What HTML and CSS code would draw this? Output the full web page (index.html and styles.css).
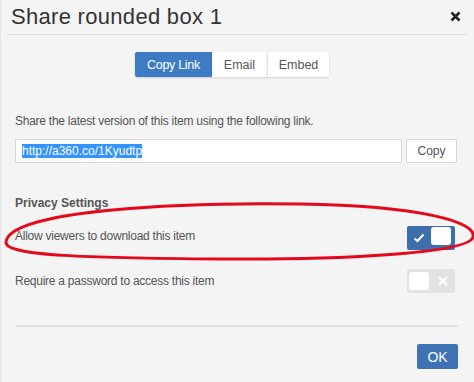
FILE: index.html
```html
<!DOCTYPE html>
<html lang="en">

<head>
    <meta charset="UTF-8">
    <meta name="viewport" content="width=device-width, initial-scale=1.0">
    <title>Share rounded box 1</title>
    <link rel="stylesheet" href="styles.css">
</head>

<body>
    <div class="dialog">
        <div class="dialog-header">
            <h1>Share rounded box 1</h1>
            <svg class="close" width="11" height="11" viewBox="0 0 11 11">
                <path d="M1.5 1.5 L9.5 9.5 M9.5 1.5 L1.5 9.5" fill="none" stroke="#222" stroke-width="2.6" />
            </svg>
        </div>

        <div class="dialog-body">
            <div class="tabs">
                <button class="tab active">Copy Link</button>
                <button class="tab email">Email</button>
                <button class="tab embed">Embed</button>
            </div>

            <p class="hint">Share the latest version of this item using the following link.</p>

            <div class="link-row">
                <div class="link-input"><span class="selected">http://a360.co/1Kyudtp</span></div>
                <button class="copy-btn">Copy</button>
            </div>

            <h2>Privacy Settings</h2>

            <div class="setting first">
                <span>Allow viewers to download this item</span>
                <div class="toggle on">
                    <svg width="12" height="10" viewBox="0 0 12 10">
                        <path d="M1.5 5.5 L4.5 8 L10.5 1.5" fill="none" stroke="#fff" stroke-width="2" />
                    </svg>
                    <span class="knob"></span>
                </div>
            </div>

            <div class="setting">
                <span>Require a password to access this item</span>
                <div class="toggle off">
                    <span class="knob"></span>
                    <svg width="12" height="12" viewBox="0 0 12 12">
                        <path d="M2 2 L10 10 M10 2 L2 10" fill="none" stroke="#fff" stroke-width="2" />
                    </svg>
                </div>
            </div>
        </div>

        <div class="dialog-footer">
            <button class="ok-btn">OK</button>
        </div>

        <!-- red annotation circle -->
        <svg class="mark" width="474" height="80" viewBox="0 0 474 80">
            <path d="M5 46 C 8 14, 180 6, 300 8 C 420 10, 476 26, 472 41 C 468 58, 330 64, 220 63 C 90 62, 3 60, 5 46 Z"
                fill="none" stroke="#e4081a" stroke-width="3" />
        </svg>
    </div>
</body>

</html>
```

FILE: styles.css
```css
body {
    margin: 0;
    background-color: #f4f4f4;
    font-family: "Liberation Sans", Arial, sans-serif;
    color: #555;
}

.dialog {
    position: relative;
    width: 474px;
    height: 382px;
    box-sizing: border-box;
    border-left: 1px solid #e6e6e6;
}

.dialog-header {
    display: flex;
    justify-content: space-between;
    align-items: center;
    height: 34px;
    margin: 0 7px 0 6px;
    padding: 0 6px 0 4px;
    border-bottom: 1px solid #dcdcdc;
}

.dialog-header h1 {
    margin: 0;
    font-size: 22px;
    font-weight: normal;
    letter-spacing: 0.3px;
    color: #333;
}

.close {
    margin-top: -2px;
}

.dialog-body {
    padding: 0 17px 0 14px;
}

.tabs {
    display: flex;
    justify-content: center;
    margin: 17px 0 0 -8px;
}

.tab {
    height: 25px;
    padding: 0;
    border: none;
    background-color: #fff;
    font-family: inherit;
    font-size: 12.5px;
    color: #555;
    white-space: nowrap;
    box-shadow: 0 1px 2px rgba(0, 0, 0, 0.15);
}

.tab.email {
    width: 55px;
}

.tab.embed {
    width: 62px;
    border-left: 1px solid #e4e4e4;
    border-radius: 0 2px 2px 0;
}

.tab.active {
    width: 77px;
    background-color: #3d7cc2;
    color: #fff;
    letter-spacing: -0.3px;
    border-radius: 2px 0 0 2px;
}

.hint {
    margin: 37px 0 0;
    font-size: 12px;
    letter-spacing: -0.25px;
    line-height: 15px;
}

.link-row {
    display: flex;
    gap: 4px;
    margin-top: 10px;
}

.link-input {
    flex: 1;
    height: 24px;
    box-sizing: border-box;
    border: 1px solid #d8d8d8;
    background-color: #fff;
    padding: 4px 6px;
    font-size: 12px;
    line-height: 14px;
}

.selected {
    background-color: #3393ff;
    color: #fff;
}

.copy-btn {
    width: 51px;
    height: 24px;
    border: 1px solid #d6d6d6;
    border-radius: 2px;
    background-color: #fff;
    font-family: inherit;
    font-size: 12px;
    color: #555;
}

h2 {
    margin: 33px 0 0;
    font-size: 12px;
    line-height: 15px;
    font-weight: bold;
    color: #555;
}

.setting {
    display: flex;
    justify-content: space-between;
    align-items: center;
    height: 24px;
    margin-top: 15px;
    font-size: 12px;
    letter-spacing: -0.25px;
}

.setting.first span {
    margin-top: -5px;
}

.setting + .setting {
    margin-top: 19px;
}

.toggle {
    display: flex;
    align-items: center;
    justify-content: space-between;
    width: 48px;
    height: 24px;
    box-sizing: border-box;
    padding: 0 4px 0 6px;
    margin-right: 2px;
    border-radius: 2px;
}

.toggle.on {
    background-color: #3d6fac;
}

.toggle.off {
    background-color: #e2e2e2;
    padding: 0 6px 0 2px;
}

.knob {
    width: 20px;
    height: 18px;
    border-radius: 3px;
    background-color: #fff;
}

.dialog-footer {
    display: flex;
    justify-content: flex-end;
    margin: 32px 16px 0 15px;
    padding-top: 17px;
    border-top: 2px solid #e2e2e2;
}

.ok-btn {
    width: 41px;
    height: 25px;
    border: none;
    border-radius: 2px;
    background-color: #3d72b4;
    color: #fff;
    font-family: inherit;
    font-size: 14px;
}

.mark {
    position: absolute;
    left: 0;
    top: 196px;
}
```
